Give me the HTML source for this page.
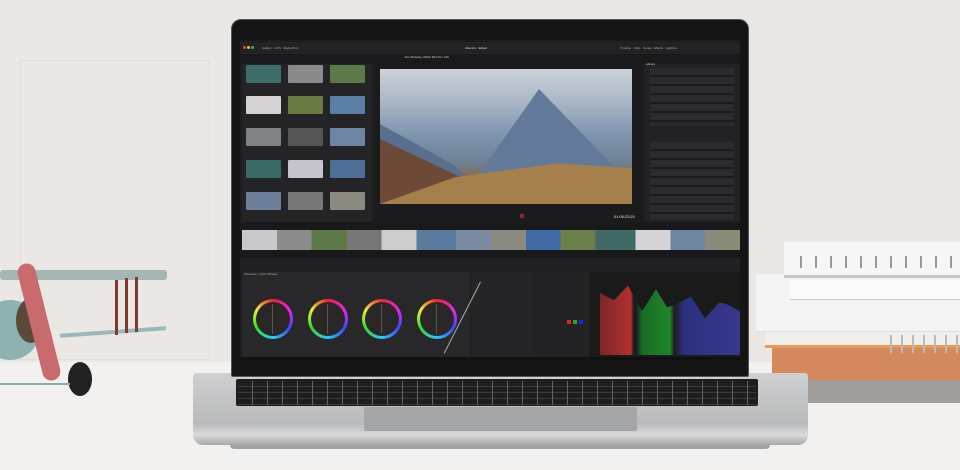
<!DOCTYPE html><html><head><style>
*{margin:0;padding:0;box-sizing:border-box}
body{width:960px;height:470px;overflow:hidden;position:relative;background:#ebe7e4;font-family:"Liberation Sans",sans-serif}
.a{position:absolute}
.t{position:absolute;border-radius:1px}
.wh{position:absolute;width:40px;height:40px;border-radius:50%;background:conic-gradient(#e23 0,#e2e 17%,#44f 33%,#2cf 50%,#3d3 67%,#ee3 83%,#e23 100%)}
.wh:after{content:"";position:absolute;left:3px;top:3px;width:34px;height:34px;border-radius:50%;background:#2b2727}
.wh:before{content:"";position:absolute;left:19px;top:5px;width:1px;height:30px;background:#555;z-index:1}
.lb{position:absolute;font-size:3px;color:#aaa}
</style></head><body>
<div class="a" style="left:20px;top:60px;width:190px;height:300px;border:1px solid #e2dcd8"></div>
<div class="a" style="left:0;top:362px;width:960px;height:108px;background:#f2f1f0"></div>
<!-- plane -->
<div class="a" style="left:0;top:270px;width:167px;height:10px;background:#a3b6b2;border-radius:3px"></div>
<div class="a" style="left:60px;top:330px;width:106px;height:4px;background:#9ab8bb;transform:rotate(-4deg)"></div>
<div class="a" style="left:115px;top:280px;width:3px;height:55px;background:#7a3b30"></div>
<div class="a" style="left:125px;top:278px;width:3px;height:55px;background:#7a3b30"></div>
<div class="a" style="left:135px;top:277px;width:3px;height:55px;background:#7a3b30"></div>
<div class="a" style="left:-20px;top:300px;width:60px;height:60px;border-radius:50%;background:#8eb2b2"></div>
<div class="a" style="left:16px;top:298px;width:30px;height:45px;border-radius:50%;background:#5a4a3a"></div>
<div class="a" style="left:30px;top:262px;width:18px;height:120px;border-radius:10px;background:#c96a6e;transform:rotate(-14deg)"></div>
<div class="a" style="left:68px;top:362px;width:24px;height:34px;border-radius:50%;background:#222"></div>
<div class="a" style="left:0;top:383px;width:70px;height:2px;background:#8aa"></div>
<!-- books -->
<div class="a" style="left:772px;top:375px;width:188px;height:28px;background:#a09d9a"></div>
<div class="a" style="left:772px;top:345px;width:188px;height:35px;background:#d4895f"></div>
<div class="a" style="left:765px;top:330px;width:195px;height:18px;background:#f1efee;border-bottom:3px solid #e99a5a"></div>
<div class="a" style="left:764px;top:310px;width:196px;height:4px;background:#e99a5a"></div>
<div class="a" style="left:756px;top:274px;width:204px;height:58px;background:#f4f4f5;border-bottom:1px solid #ddd"></div>
<div class="a" style="left:790px;top:280px;width:170px;height:20px;background:#fafafa;border-bottom:1px solid #ccc"></div>
<div class="a" style="left:784px;top:242px;width:176px;height:36px;background:#f6f6f7;border-bottom:3px solid #c7c7cc"></div>
<div class="a" style="left:800px;top:256px;width:160px;height:12px;background:repeating-linear-gradient(90deg,#999 0 2px,transparent 2px 15px)"></div>
<div class="a" style="left:890px;top:335px;width:70px;height:18px;background:repeating-linear-gradient(90deg,#bbb 0 2px,transparent 2px 11px)"></div>
<!-- laptop base -->
<div class="a" style="left:193px;top:373px;width:615px;height:72px;border-radius:3px 3px 10px 10px;background:linear-gradient(#cfd0d1,#b9babb 70%,#d9dadb 86%,#a7a8a9)"></div>
<div class="a" style="left:230px;top:445px;width:540px;height:4px;background:#555;border-radius:0 0 8px 8px;opacity:.5"></div>
<div class="a" style="left:236px;top:379px;width:522px;height:27px;background:#1e1e20;border-radius:2px"></div>
<div class="a" style="left:238px;top:381px;width:518px;height:24px;background:repeating-linear-gradient(90deg,transparent 0 14px,#aaa 14px 15px),repeating-linear-gradient(transparent 0 5px,#555 5px 6px);opacity:.5"></div>
<div class="a" style="left:364px;top:407px;width:273px;height:24px;background:#a4a5a6;border-radius:2px"></div>
<!-- lid -->
<div class="a" style="left:231px;top:19px;width:518px;height:358px;background:#151516;border-radius:10px 10px 2px 2px;border:1px solid #555"></div>
<div class="a" style="left:240px;top:40px;width:500px;height:319px;background:#1d1d20"></div>
<div class="a" style="left:240px;top:42px;width:500px;height:12px;background:#232326"></div>
<div class="a" style="left:243px;top:46px;width:3px;height:3px;border-radius:50%;background:#e44"></div>
<div class="a" style="left:247px;top:46px;width:3px;height:3px;border-radius:50%;background:#eb3"></div>
<div class="a" style="left:251px;top:46px;width:3px;height:3px;border-radius:50%;background:#3b4"></div>
<div class="lb" style="left:262px;top:46px">Gallery &nbsp; LUTs &nbsp; Media Pool</div>
<div class="lb" style="left:465px;top:46px;color:#ddd">Altamira &nbsp; Edited</div>
<div class="lb" style="left:620px;top:46px">Timeline &nbsp; Clips &nbsp; Nodes &nbsp; Effects &nbsp; Lightbox</div>
<div class="a" style="left:240px;top:54px;width:500px;height:10px;background:#1a1a1c"></div>
<div class="lb" style="left:404px;top:55px;color:#ccc">John Brawley URSA Mini Pro 12K</div>
<div class="a" style="left:242px;top:64px;width:130px;height:158px;background:#242427"></div>
<div class="t" style="left:246px;top:65px;width:35px;height:18px;background:#3d6d6a"></div>
<div class="t" style="left:288px;top:65px;width:35px;height:18px;background:#8b8a88"></div>
<div class="t" style="left:330px;top:65px;width:35px;height:18px;background:#5c7a48"></div>
<div class="t" style="left:246px;top:96px;width:35px;height:18px;background:#d5d3d3"></div>
<div class="t" style="left:288px;top:96px;width:35px;height:18px;background:#6a7a40"></div>
<div class="t" style="left:330px;top:96px;width:35px;height:18px;background:#5b7ea5"></div>
<div class="t" style="left:246px;top:128px;width:35px;height:18px;background:#7f8282"></div>
<div class="t" style="left:288px;top:128px;width:35px;height:18px;background:#555"></div>
<div class="t" style="left:330px;top:128px;width:35px;height:18px;background:#6d84a2"></div>
<div class="t" style="left:246px;top:160px;width:35px;height:18px;background:#3a6a66"></div>
<div class="t" style="left:288px;top:160px;width:35px;height:18px;background:#c6c5cc"></div>
<div class="t" style="left:330px;top:160px;width:35px;height:18px;background:#4d6f95"></div>
<div class="t" style="left:246px;top:192px;width:35px;height:18px;background:#6d7f9a"></div>
<div class="t" style="left:288px;top:192px;width:35px;height:18px;background:#777"></div>
<div class="t" style="left:330px;top:192px;width:35px;height:18px;background:#8a8a80"></div>
<div class="a" style="left:374px;top:64px;width:268px;height:158px;background:#1b1b1d"></div>
<div class="a" style="left:380px;top:69px;width:252px;height:135px;background:linear-gradient(#cdd3da 0,#a8b6c6 25%,#7d93ad 50%,#6e7f93 70%,#8c6a45 82%,#a27a48 92%,#6b5a4a 100%);overflow:hidden">
<div class="a" style="left:60px;top:20px;width:180px;height:140px;background:#62799a;clip-path:polygon(0 100%,55% 0,100% 60%,100% 100%)"></div>
<div class="a" style="left:0;top:35px;width:120px;height:100px;background:#58708e;clip-path:polygon(0 20%,60% 60%,100% 100%,0 100%)"></div>
<div class="a" style="left:0;top:70px;width:110px;height:65px;background:#6d4a38;clip-path:polygon(0 0,100% 80%,100% 100%,0 100%)"></div>
<div class="a" style="left:0;top:90px;width:252px;height:45px;background:#a5804d;clip-path:polygon(0 100%,30% 40%,70% 10%,100% 20%,100% 100%)"></div>
</div>
<div class="lb" style="left:614px;top:214px;color:#eee;font-size:4px">01:00:23:21</div>
<div class="a" style="left:520px;top:214px;width:4px;height:4px;border-radius:50%;border:1px solid #c33"></div>
<div class="a" style="left:644px;top:64px;width:96px;height:158px;background:#222225"></div>
<div class="lb" style="left:646px;top:62px;color:#ddd">Library</div>
<div class="a" style="left:650px;top:68px;width:84px;height:58px;background:repeating-linear-gradient(#2b2b2e 0 7px,#1c1c1e 7px 9px)"></div>
<div class="a" style="left:650px;top:142px;width:84px;height:78px;background:repeating-linear-gradient(#2b2b2e 0 7px,#1c1c1e 7px 9px)"></div>
<div class="a" style="left:240px;top:222px;width:500px;height:36px;background:#19191b"></div>
<div class="a" style="left:242px;top:230px;width:498px;height:20px;background:linear-gradient(90deg,#c9c9cc 0 7%,#8c8c8c 7% 14%,#5c7a48 14% 21%,#777 21% 28%,#ccc 28% 35%,#5b7aa0 35% 43%,#7a8aa0 43% 50%,#8a8a80 50% 57%,#3f6aa8 57% 64%,#6d7f48 64% 71%,#3f6a66 71% 79%,#d5d5d8 79% 86%,#6f86a3 86% 93%,#8a8a78 93%)"></div>
<div class="a" style="left:240px;top:258px;width:500px;height:14px;background:#212124"></div>
<div class="a" style="left:242px;top:272px;width:228px;height:85px;background:#28282b"></div>
<div class="lb" style="left:244px;top:272px">Primaries - Color Wheels</div>
<div class="wh" style="left:253px;top:299px"></div>
<div class="wh" style="left:308px;top:299px"></div>
<div class="wh" style="left:362px;top:299px"></div>
<div class="wh" style="left:417px;top:299px"></div>
<div class="a" style="left:471px;top:272px;width:60px;height:85px;background:#252528"></div>
<div class="a" style="left:480px;top:282px;width:1px;height:80px;background:#aaa;transform:rotate(27deg);transform-origin:top"></div>
<div class="a" style="left:531px;top:272px;width:58px;height:85px;background:#232326"></div>
<div class="a" style="left:567px;top:320px;width:4px;height:4px;background:#d22"></div>
<div class="a" style="left:573px;top:320px;width:4px;height:4px;background:#2a2"></div>
<div class="a" style="left:579px;top:320px;width:4px;height:4px;background:#22d"></div>
<div class="a" style="left:589px;top:272px;width:151px;height:85px;background:#1a1a1b"></div>
<div class="a" style="left:600px;top:282px;width:140px;height:73px;background:linear-gradient(90deg,#902828 0,#c33 22%,#1d1d1f 24%,#1d1d1f 26%,#187a26 30%,#1f9a2c 50%,#1d1d1f 53%,#2f3590 60%,#3c3ca0 100%);opacity:.85;clip-path:polygon(0 15%,10% 25%,20% 5%,30% 40%,40% 10%,48% 35%,55% 30%,65% 20%,75% 50%,85% 28%,90% 30%,100% 40%,100% 100%,0 100%)"></div>
<div class="a" style="left:240px;top:357px;width:500px;height:3px;background:#111"></div>
</body></html>
